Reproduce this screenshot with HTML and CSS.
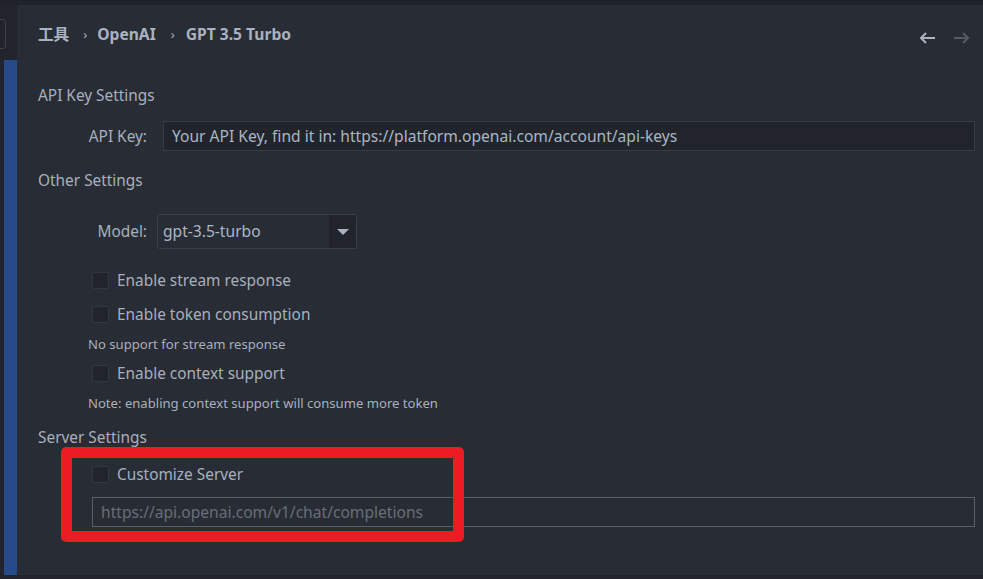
FILE: index.html
```html
<!DOCTYPE html>
<html lang="en">
<head>
<meta charset="utf-8">
<title>OpenAI Settings</title>
<link rel="stylesheet" href="styles.css">
</head>
<body>
<div class="topbar"></div>
<div class="layout">
  <aside class="sidebar">
    <div class="search-edge"></div>
    <div class="nav-indicator"></div>
  </aside>
  <main class="panel">
    <header class="header">
      <nav class="crumbs">
        <span class="crumb">工具</span>
        <span class="sep">›</span>
        <span class="crumb">OpenAI</span>
        <span class="sep sep-last">›</span>
        <span class="crumb">GPT 3.5 Turbo</span>
      </nav>
      <div class="nav-arrows">
        <svg class="arrow" width="18" height="14" viewBox="0 0 18 14"><path d="M17 7H3M8 2L3 7l5 5" fill="none" stroke="#aab3c1" stroke-width="2"/></svg>
        <svg class="arrow dim" width="18" height="14" viewBox="0 0 18 14"><path d="M1 7h14M10 2l5 5-5 5" fill="none" stroke="#565a62" stroke-width="2"/></svg>
      </div>
    </header>

    <h2 class="section-title t-api">API Key Settings</h2>
    <div class="field-row r-api">
      <label class="field-label">API Key:</label>
      <div class="text-input api-input">Your API Key, find it in: https://platform.openai.com/account/api-keys</div>
    </div>

    <h2 class="section-title t-other">Other Settings</h2>
    <div class="field-row r-model">
      <label class="field-label">Model:</label>
      <div class="select">
        <span class="select-value">gpt-3.5-turbo</span>
        <span class="select-btn"><span class="tri"></span></span>
      </div>
    </div>

    <div class="check c1"><span class="box"></span><span>Enable stream response</span></div>
    <div class="check c2"><span class="box"></span><span>Enable token consumption</span></div>
    <p class="note n1">No support for stream response</p>
    <div class="check c3"><span class="box"></span><span>Enable context support</span></div>
    <p class="note n2">Note: enabling context support will consume more token</p>

    <h2 class="section-title t-server">Server Settings</h2>
    <div class="check c4"><span class="box"></span><span>Customize Server</span></div>
    <div class="url-input">https://api.openai.com/v1/chat/completions</div>
  </main>
</div>
<div class="bottombar"></div>
<div class="highlight"></div>
</body>
</html>
```

FILE: styles.css
```css
* { box-sizing: border-box; }
html, body { margin: 0; padding: 0; }
body {
  width: 983px;
  height: 579px;
  overflow: hidden;
  background: #282c34;
  font-family: "Noto Sans", "Open Sans", "Noto Sans CJK SC", sans-serif;
  color: #abb2bf;
  position: relative;
}
.topbar { height: 5px; background: #1f2228; }
.bottombar { height: 4px; background: #21252b; }
.layout { display: flex; height: 570px; }
.sidebar {
  width: 17px;
  flex: none;
  background: #21252b;
  position: relative;
}
.search-edge {
  position: absolute;
  left: -10px;
  top: 14px;
  width: 16px;
  height: 30px;
  border: 1px solid #3d424b;
  border-radius: 3px;
}
.nav-indicator {
  margin-top: 55px;
  margin-left: 4px;
  width: 13px;
  height: 515px;
  background: #274a88;
}
.panel {
  flex: 1;
  padding: 19px 8px 0 21px;
}
.header {
  display: flex;
  justify-content: space-between;
  height: 20px;
}
.crumbs {
  display: flex;
  align-items: center;
  font-weight: 700;
  font-size: 15.6px;
  line-height: 20px;
  color: #a9b2c0;
}
.sep { font-weight: 400; margin: 0 10px 0 14px; font-size: 13px; }
.sep-last { margin: 0 11px 0 15px; }
.crumb:first-child { font-weight: 600; }
.nav-arrows { display: flex; gap: 17px; margin-top: 7px; margin-right: 4px; }
.arrow { display: block; }

.section-title {
  margin: 0;
  padding-top: 1px;
  font-weight: 400;
  font-size: 15.4px;
  line-height: 20px;
  color: #a7b0bd;
}
.t-api { margin-top: 41px; }
.t-other { margin-top: 19px; }
.t-server { margin-top: 15px; }

.field-row { display: flex; align-items: center; }
.r-api { margin-top: 15px; height: 30px; }
.r-model { margin-top: 23px; height: 35px; }
.field-label {
  width: 109px;
  text-align: right;
  font-size: 15.4px;
  color: #a7b0bd;
}
.text-input {
  margin-left: 16px;
  flex: 1;
  height: 30px;
  background: #21252b;
  border: 1px solid #363b45;
  padding: 0 8px;
  font-size: 15.6px;
  line-height: 28px;
  color: #a8b6c8;
  white-space: nowrap;
}
.select {
  margin-left: 10px;
  width: 200px;
  height: 35px;
  display: flex;
  border: 1px solid #3a3f49;
  border-radius: 3px;
  background: #282c34;
  overflow: hidden;
}
.select-value {
  flex: 1;
  padding-left: 5px;
  font-size: 15.6px;
  line-height: 33px;
  color: #a8b6c8;
}
.select-btn {
  width: 27px;
  background: #21252b;
  display: flex;
  align-items: center;
  justify-content: center;
}
.tri {
  width: 0; height: 0;
  border-left: 6px solid transparent;
  border-right: 6px solid transparent;
  border-top: 6px solid #a9b2c0;
}

.check {
  display: flex;
  align-items: center;
  height: 20px;
  margin-left: 54px;
  gap: 8px;
  font-size: 15.4px;
  color: #a7b0bd;
}
.box {
  width: 17px;
  height: 17px;
  background: #21252b;
  border: 1px solid #32363f;
  border-radius: 2px;
  flex: none;
}
.c1 { margin-top: 21px; }
.c2 { margin-top: 14px; }
.c3 { margin-top: 10px; }
.c4 { margin-top: 16px; }
.note {
  margin: 11px 0 0 50px;
  font-size: 13.1px;
  line-height: 18px;
  color: #a7b0bd;
}
.url-input {
  margin: 13px 0 0 54px;
  height: 30px;
  border: 1px solid #5a5f69;
  padding: 0 8px;
  font-size: 15.6px;
  line-height: 28px;
  color: #696e77;
}
.highlight {
  position: absolute;
  left: 61px;
  top: 447px;
  width: 403px;
  height: 95px;
  border: 11px solid #ec1c24;
  border-radius: 5px;
}
```
